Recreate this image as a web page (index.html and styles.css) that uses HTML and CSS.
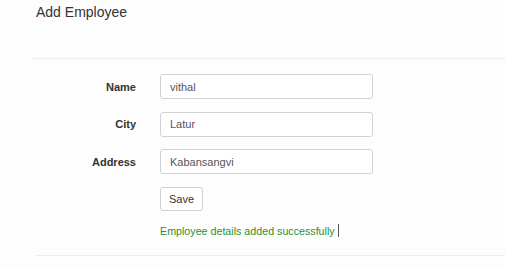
FILE: index.html
```html
<!DOCTYPE html>
<html>
<head>
<meta charset="utf-8">
<link rel="stylesheet" href="styles.css">
</head>
<body>
<div class="page">
  <h2 class="title">Add Employee</h2>
  <hr class="rule rule-top">
  <form class="form">
    <div class="row">
      <label class="label">Name</label>
      <div class="input">vithal</div>
    </div>
    <div class="row">
      <label class="label">City</label>
      <div class="input">Latur</div>
    </div>
    <div class="row">
      <label class="label">Address</label>
      <div class="input">Kabansangvi</div>
    </div>
    <div class="row row-btn">
      <span class="label"></span>
      <div class="btn">Save</div>
    </div>
    <div class="row row-msg">
      <span class="label"></span>
      <div class="msg">Employee details added successfully <span class="caret"></span></div>
    </div>
  </form>
  <hr class="rule rule-bottom">
</div>
</body>
</html>
```
FILE: styles.css
```css
html, body {
  margin: 0;
  padding: 0;
  background: #fdfdfd;
}
body {
  font-family: "Liberation Sans", Arial, sans-serif;
  color: #333;
  width: 505px;
  height: 267px;
  overflow: hidden;
}
.page {
  padding-left: 32px;
}
.title {
  margin: 0;
  padding: 3px 0 0 4px;
  font-size: 14px;
  font-weight: normal;
  line-height: 18px;
  color: #333;
}
.rule {
  border: 0;
  border-top: 1px solid #eeeeee;
  margin: 0;
}
.rule-top {
  margin-top: 37px;
}
.form {
  margin-top: 15px;
}
.row {
  display: flex;
  align-items: center;
  height: 25px;
  margin-bottom: 12.5px;
}
.label {
  width: 104px;
  text-align: right;
  font-size: 11px;
  font-weight: bold;
  color: #333;
  margin-right: 24px;
  flex: none;
}
.input {
  width: 213px;
  height: 25px;
  box-sizing: border-box;
  border: 1px solid #d2d2d2;
  border-radius: 3px;
  background: #fff;
  font-size: 11px;
  color: #555;
  padding: 0 9px;
  display: flex;
  align-items: center;
}
.row-btn {
  height: 24px;
  margin-bottom: 13px;
}
.btn {
  width: 43px;
  height: 24px;
  box-sizing: border-box;
  border: 1px solid #cfcfcf;
  border-radius: 3px;
  background: #fff;
  font-size: 11px;
  color: #333;
  display: flex;
  align-items: center;
  justify-content: center;
}
.row-msg {
  height: 14px;
  margin-bottom: 0;
}
.msg {
  font-size: 10.7px;
  color: #2f8f2f;
  display: flex;
  align-items: center;
  white-space: pre;
}
.caret {
  display: inline-block;
  width: 1px;
  height: 13px;
  background: #555;
}
.rule-bottom {
  margin-top: 17px;
  margin-left: 4px;
}
```
